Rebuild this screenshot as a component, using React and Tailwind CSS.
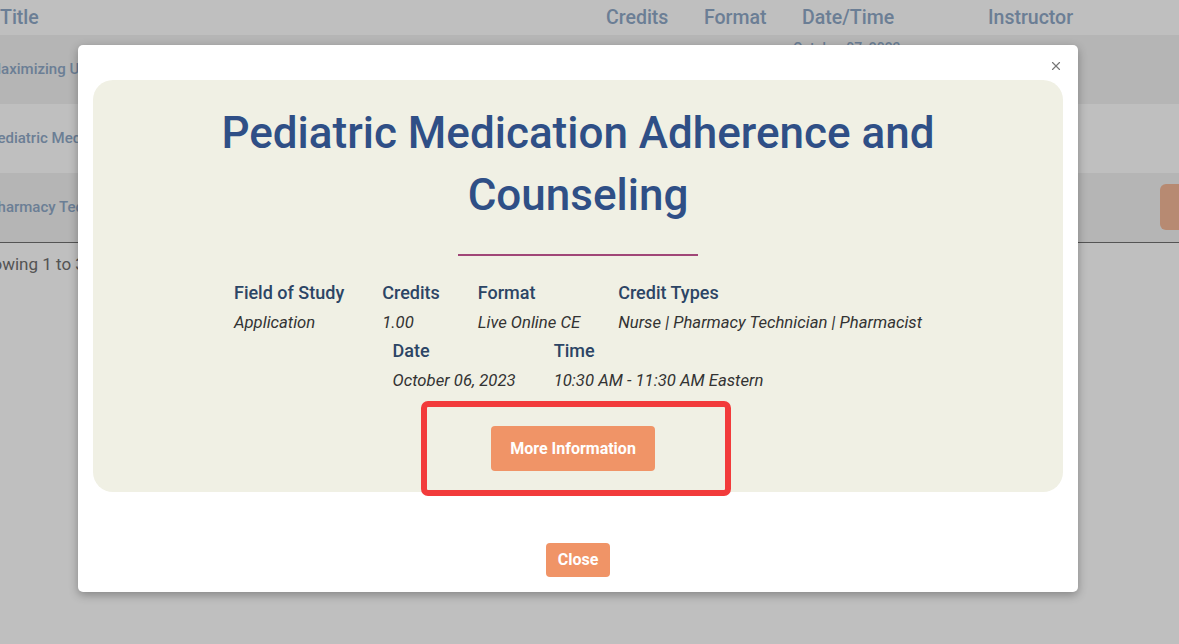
import React from "react";
import { X } from "lucide-react";

const rows = [
  { title: "Maximizing Utilization of Pharmacy Services", stripe: true, date: "October 07, 2023" },
  { title: "Pediatric Medication Adherence and Counseling", stripe: false },
  { title: "Pharmacy Technician Workflow Essentials", stripe: true, button: true },
];

const details = [
  { label: "Field of Study", value: "Application" },
  { label: "Credits", value: "1.00" },
  { label: "Format", value: "Live Online CE" },
  { label: "Credit Types", value: "Nurse | Pharmacy Technician | Pharmacist" },
  { label: "Date", value: "October 06, 2023" },
  { label: "Time", value: "10:30 AM - 11:30 AM Eastern" },
];

export default function App() {
  return (
    <div
      className="relative h-[644px] w-[1179px] overflow-hidden bg-white"
      style={{ fontFamily: "Roboto, 'Liberation Sans', sans-serif" }}
    >
      {/* ================= PAGE TABLE ================= */}
      <div className="-ml-[10px] w-[1200px]">
        <div className="flex h-[35px] items-center text-[19.5px] font-medium text-[#8fa9c7]">
          <div className="w-[616px] pl-[10px]">Title</div>
          <div className="w-[98px]">Credits</div>
          <div className="w-[98px]">Format</div>
          <div className="w-[186px]">Date/Time</div>
          <div>Instructor</div>
        </div>
        {rows.map((r, i) => (
          <div
            key={i}
            className={`relative flex h-[69px] items-center text-[15px] font-medium text-[#8fa9c7] ${
              r.stripe ? "bg-[#f2f2f2]" : "bg-white"
            }`}
          >
            <div className="-ml-[2px] w-[616px]">{r.title}</div>
            {r.date && (
              <div className="absolute left-[803px] top-[3px] text-[14px]">{r.date}</div>
            )}
            {r.button && (
              <div className="absolute left-[1170px] top-[11px] h-[46px] w-[80px] rounded-md bg-[#f5b898]" />
            )}
          </div>
        ))}
        <div className="h-px bg-[#707070]" />
        <div className="-ml-[17px] pt-[9px] text-[17px] text-[#707070]">Showing 1 to 3 of 3 entries</div>
      </div>

      {/* ================= MODAL ================= */}
      <div className="absolute inset-0 bg-black/25">
        <div className="relative ml-[78px] mt-[45px] w-[1000px] rounded-[5px] bg-white px-[15px] pb-[15px] pt-[35px] shadow-[0_3px_10px_rgba(0,0,0,0.3)]">
          <button className="absolute right-[15px] top-[14px] text-[#777]">
            <X size={14} strokeWidth={2} />
          </button>

          <div className="rounded-[20px] bg-[#f0f0e4] px-16 pb-[21px] pt-[22px]">
            <h2 className="text-center text-[44px] font-medium leading-[62px] text-[#2f4f86]">
              Pediatric Medication Adherence and Counseling
            </h2>
            <div className="mx-auto mt-[28px] h-[2px] w-[240px] bg-[#a04677]" />

            <div className="mx-auto mt-[23px] flex max-w-[780px] flex-wrap justify-center gap-x-[38px]">
              {details.map(d => (
                <div key={d.label} className="h-[58px]">
                  <div className="text-[18px] font-medium leading-[28px] text-[#2c4565]">{d.label}</div>
                  <div className="pt-px text-[16.7px] italic leading-[29px] text-[#333]">{d.value}</div>
                </div>
              ))}
            </div>

            <div className="mt-[31px] flex justify-center">
              <button className="mr-[10px] h-[45px] w-[164px] rounded-[4px] bg-[#f09467] text-[16px] font-bold text-white">
                More Information
              </button>
            </div>
          </div>

          <div className="mt-[51px] flex justify-center">
            <button className="h-[34px] w-[64px] rounded-[4px] bg-[#f09467] text-[16px] font-bold text-white">
              Close
            </button>
          </div>

          {/* annotation box */}
          <div className="absolute left-[343px] top-[356px] h-[95px] w-[310px] rounded-[7px] border-[6px] border-[#f23b3b]" />
        </div>
      </div>
    </div>
  );
}
